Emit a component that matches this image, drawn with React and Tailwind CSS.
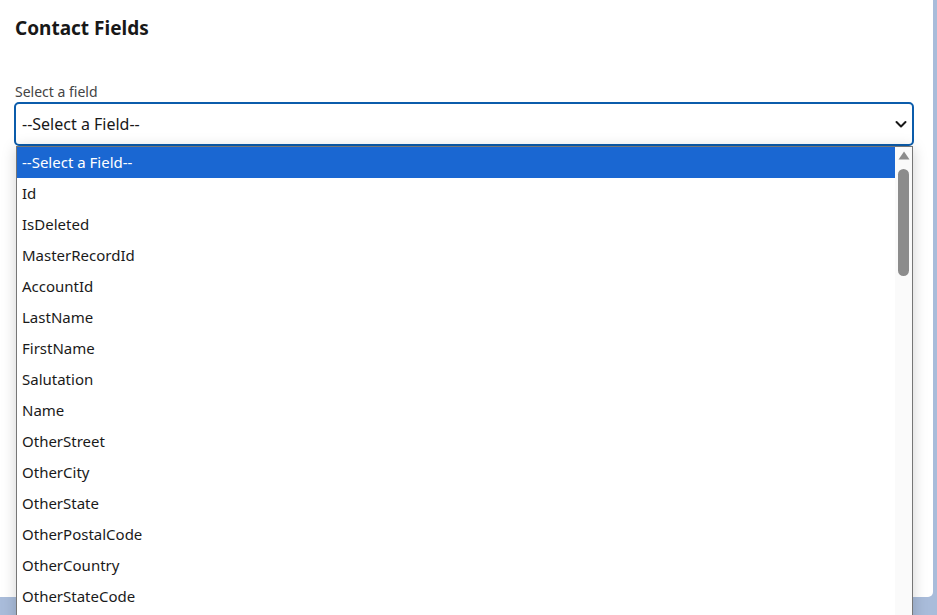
import React from 'react';

const fields = [
  '--Select a Field--',
  'Id',
  'IsDeleted',
  'MasterRecordId',
  'AccountId',
  'LastName',
  'FirstName',
  'Salutation',
  'Name',
  'OtherStreet',
  'OtherCity',
  'OtherState',
  'OtherPostalCode',
  'OtherCountry',
  'OtherStateCode',
];

const App = () => {
  return (
    <div className="relative w-[937px] h-[615px] overflow-hidden bg-[#a9bcda] font-['Noto_Sans',sans-serif]">
      {/* Modal panel */}
      <div className="w-[933px] h-[597px] bg-white rounded-br-[5px] pl-[14px] pr-[19px] pt-[15px]">
        <h2 className="text-[19px] leading-[26px] font-bold text-[#181818] pl-px">Contact Fields</h2>
        <label className="block mt-[41px] text-[14px] leading-[20px] text-[#444] pl-px">Select a field</label>
        <div className="h-[44px] border-2 border-[#0b5cab] rounded-[5px] flex items-center justify-between pl-[6px] pr-[4px]">
          <span className="text-[16px] text-[#181818]">--Select a Field--</span>
          <svg width="14" height="14" viewBox="0 0 14 14" fill="none" stroke="#181818" strokeWidth="2" strokeLinecap="round" strokeLinejoin="round">
            <path d="M2.5 5l4.5 4.5L11.5 5" />
          </svg>
        </div>
      </div>

      {/* Open dropdown list */}
      <div className="absolute left-[16px] top-[146px] w-[897px] h-[520px] bg-white border border-[#767676] shadow-[0_2px_14px_rgba(0,0,0,0.18)] flex">
        <ul className="flex-1">
          {fields.map((f, i) => (
            <li
              key={f}
              className={`h-[31px] flex items-center pl-[5px] text-[15px] ${i === 0 ? 'bg-[#1a67d2] text-white' : 'text-[#1a1a1a]'}`}
            >
              {f}
            </li>
          ))}
        </ul>
        <div className="w-[17px] bg-[#fafafa] flex flex-col items-center pt-[4px]">
          <svg width="12" height="9" viewBox="0 0 12 9">
            <path d="M6 0.5L11.5 8.5H0.5Z" fill="#8c8c8c" />
          </svg>
          <div className="mt-[9px] w-[11px] h-[107px] rounded-full bg-[#8c8c8c]" />
        </div>
      </div>
    </div>
  );
};

export default App;
